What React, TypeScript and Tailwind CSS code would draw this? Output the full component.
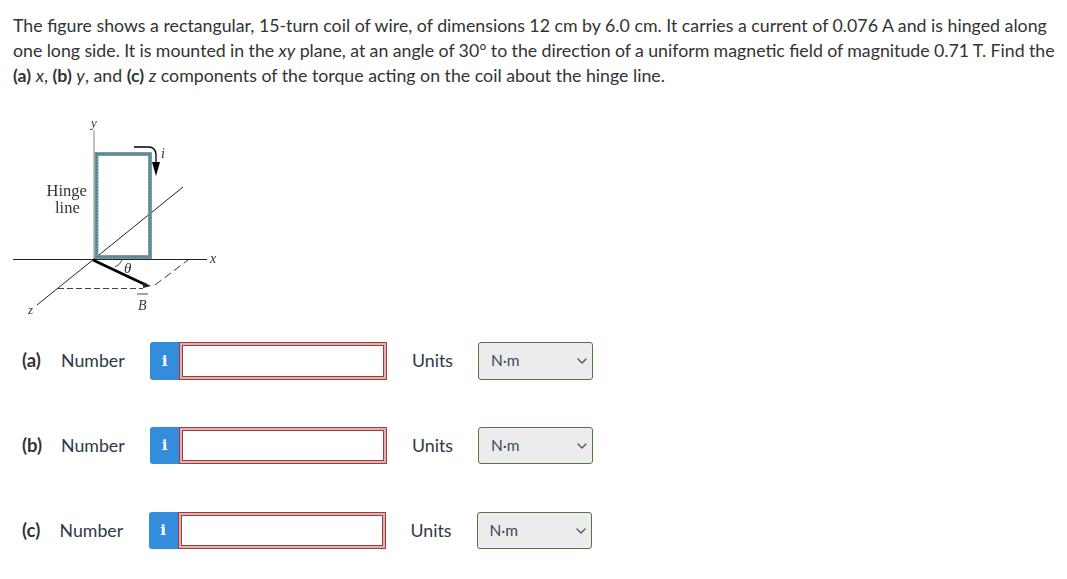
import React from "react";
import { ChevronDown } from "lucide-react";

function Figure() {
  return (
    <svg width="230" height="210" viewBox="0 0 230 210" className="block blur-[0.5px]">
      <line x1="94" y1="20" x2="94" y2="150" stroke="#888" strokeWidth="1" />
      <line x1="13" y1="149.5" x2="207" y2="149.5" stroke="#222" strokeWidth="1" />
      <line x1="37" y1="195" x2="94" y2="149" stroke="#222" strokeWidth="1" />
      <line x1="94" y1="149" x2="183" y2="77" stroke="#222" strokeWidth="1" />
      <rect x="96.5" y="44" width="53.5" height="103" fill="none" stroke="#6b929e" strokeWidth="3.8" />
      <rect x="96.5" y="44" width="53.5" height="103" fill="none" stroke="#2f4a55" strokeOpacity="0.45" strokeWidth="1.4" strokeDasharray="1 2" />
      <line x1="93" y1="150" x2="146" y2="175" stroke="#000" strokeWidth="2.6" />
      <polygon points="151,176 143,172 143,178" fill="#222" />
      <line x1="58" y1="178.5" x2="143" y2="178.5" stroke="#444" strokeWidth="1" strokeDasharray="6 3" />
      <line x1="155" y1="175" x2="188" y2="150" stroke="#333" strokeWidth="1" strokeDasharray="8 4" />
      <path d="M134 37 H149 Q155 37 156 44 V52" fill="none" stroke="#000" strokeWidth="1.3" />
      <polygon points="152,52 160,52 156,66" fill="#000" />
      <path d="M115 157 Q120 155 122 150" fill="none" stroke="#333" strokeWidth="0.9" />
      <g fontFamily="'Liberation Serif', serif" fill="#333">
        <text x="91" y="17" fontSize="13" fontStyle="italic">y</text>
        <text x="161" y="48" fontSize="14" fontStyle="italic">i</text>
        <text x="46.5" y="86" fontSize="16.5">Hinge</text>
        <text x="55" y="103" fontSize="16.5">line</text>
        <text x="124" y="163" fontSize="15" fontStyle="italic">θ</text>
        <text x="210" y="153" fontSize="14" fontStyle="italic">x</text>
        <text x="28" y="204" fontSize="13" fontStyle="italic">z</text>
        <text x="138" y="200" fontSize="14" fontStyle="italic">B</text>
      </g>
      <line x1="137" y1="184" x2="148" y2="184" stroke="#333" strokeWidth="0.9" />
    </svg>
  );
}

function Row({ label, rowClass, labelClass, textClass }: { label: string; rowClass: string; labelClass: string; textClass: string }) {
  return (
    <div className={`flex items-center ml-[22px] ${rowClass}`}>
      <span className={`font-bold text-[18.5px] text-[#333] ${labelClass} ${textClass}`}>{label}</span>
      <span className={`w-[89px] text-[#2d3b45] ${textClass}`}>Number</span>
      <div className="w-[29px] h-full bg-[#348cdd] rounded-l-[3px] flex items-center justify-center text-white font-bold text-[15px] font-['DejaVu_Serif',serif]">
        i
      </div>
      <div className="w-[208px] h-full border border-[#a23a3a] bg-[#dcb4b4] p-[2px]">
        <input className="block w-full h-full border border-[#a23a3a] bg-white outline-none" />
      </div>
      <span className={`ml-[25px] w-[66px] text-[#2d3b45] ${textClass}`}>Units</span>
      <div className="relative w-[115px] h-full">
        <select
          defaultValue="N·m"
          className="appearance-none block w-full h-full pl-[12px] border border-[#4b7b3f] rounded-[3px] bg-[#ececec] text-[15.5px] text-[#3d4a5a] font-['Lato',sans-serif]"
        >
          <option>N·m</option>
        </select>
        <ChevronDown size={16} strokeWidth={2} className="absolute right-[3px] top-1/2 -translate-y-1/2 text-[#555] pointer-events-none" />
      </div>
    </div>
  );
}

export default function App() {
  return (
    <div className="w-[1067px] h-[579px] bg-white overflow-hidden font-['Lato',sans-serif] text-[17.75px] text-[#333]">
      <p className="pl-[13px] pt-[13px] w-[1060px] leading-[25px] text-[#333]">
        The figure shows a rectangular, 15-turn coil of wire, of dimensions 12 cm by 6.0 cm. It carries a current of 0.076 A and is hinged along <span className="[word-spacing:-0.22px]">one long side. It is mounted in the <i>xy</i> plane, at an angle of 30° to the direction of a uniform magnetic field of magnitude 0.71 T. Find the</span> <b>(a)</b> <i>x</i>, <b>(b)</b> <i>y</i>, and <b>(c)</b> <i>z</i> components of the torque acting on the coil about the hinge line.
      </p>
      <div className="mt-[22px]">
        <Figure />
      </div>
      <Row label="(a)" rowClass="mt-[22px] h-[38px]" labelClass="w-[39px]" textClass="pb-[1px]" />
      <Row label="(b)" rowClass="mt-[47px] h-[37px]" labelClass="w-[39px]" textClass="pb-0" />
      <Row label="(c)" rowClass="mt-[48px] h-[37px]" labelClass="w-[37.5px]" textClass="pb-0" />
    </div>
  );
}
